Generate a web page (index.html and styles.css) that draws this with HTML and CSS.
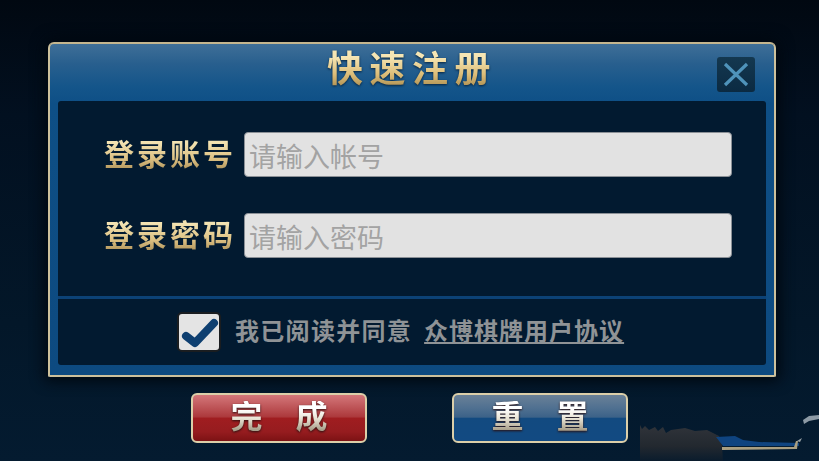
FILE: index.html
```html
<!DOCTYPE html>
<html lang="zh">
<head>
<meta charset="utf-8">
<title>快速注册</title>
<link rel="stylesheet" href="styles.css">
</head>
<body>
<main class="screen">
  <section class="dialog">
    <header class="dialog-head">
      <h1 class="title">快速注册</h1>
      <button class="close" type="button" aria-label="关闭">
        <svg viewBox="0 0 38 35" width="38" height="35"><path d="M8 7 L30 28 M30 7 L8 28" stroke="#4f93ba" stroke-width="3.2" fill="none"/></svg>
      </button>
    </header>
    <div class="dialog-body">
      <div class="fields">
        <div class="row">
          <label class="label" for="acc">登录账号</label>
          <input class="input" id="acc" placeholder="请输入帐号">
        </div>
        <div class="row">
          <label class="label" for="pwd">登录密码</label>
          <input class="input" id="pwd" placeholder="请输入密码">
        </div>
      </div>
      <div class="agree">
        <span class="check">
          <svg viewBox="0 0 40 36" width="40" height="36"><path d="M7 22 L16 29 L35 9" stroke="#0e3f70" stroke-width="8" stroke-linecap="round" stroke-linejoin="round" fill="none"/></svg>
        </span>
        <span class="agree-text">我已阅读并同意</span>
        <a class="agree-link" href="#">众博棋牌用户协议</a>
      </div>
    </div>
  </section>
  <div class="actions">
    <button class="btn btn-red" type="button"><span>完</span><span>成</span></button>
    <button class="btn btn-blue" type="button"><span>重</span><span>置</span></button>
  </div>
  <svg class="smudge" viewBox="0 0 180 40" width="180" height="40" aria-hidden="true">
    <defs>
      <linearGradient id="smudge-fade" x1="0" y1="0" x2="0" y2="1">
        <stop offset="0" stop-color="#30343a"/>
        <stop offset=".6" stop-color="#22282f"/>
        <stop offset="1" stop-color="#0a1c2d"/>
      </linearGradient>
    </defs>
    <path d="M1 4 L3 8 L6 5 L10 9 L16 6 L19 10 L24 6 L27 12 L32 9 L46 7 L56 10 L68 9 L80 15 L83 24 L84 40 L1 40 Z" fill="url(#smudge-fade)"/>
    <path d="M77 16 L96 15 L104 19 L120 21 L160 22 L160 25 L84 25 Z" fill="#0f4480"/>
    <path d="M83 26 L155 26 L157 20 L159 20 L158 28 L83 29 Z" fill="#a99f82"/>
    <path d="M158 20 L163 17 L161 21 Z" fill="#9aa4a8"/>
    <path d="M164 -1 L170 -5 L180 -6 L180 -2 L170 0 L165 3 Z" fill="#8d9aa5"/>
  </svg>
</main>
</body>
</html>
```
FILE: styles.css
```css
* { box-sizing: border-box; }
html, body { margin: 0; height: 100%; }
body {
  overflow: hidden;
  background: #02111f;
  font-family: "Liberation Sans", "Noto Sans CJK SC", sans-serif;
}
.screen {
  position: relative;
  width: 819px;
  height: 461px;
  padding: 42px 43px 0 48px;
  overflow: hidden;
  background:
    linear-gradient(180deg, #010811 0%, #021020 25%, #031729 70%, #041b30 100%);
}
.dialog {
  height: 335px;
  display: flex;
  flex-direction: column;
  padding: 0 8px 10px;
  border: 2px solid #cdc19c;
  border-top-color: #c4b68f;
  border-radius: 6px 6px 2px 2px;
  background: linear-gradient(180deg, #3f6f98 0%, #285f8e 6%, #14558a 13%, #0e4f86 18%, #0d4a80 100%);
  box-shadow: 0 0 14px 4px #010810;
}
.dialog-head {
  height: 57px;
  display: flex;
  align-items: center;
  justify-content: center;
  position: relative;
  flex: none;
}
.title {
  margin: -5px 0 0 0;
  font-size: 36px;
  font-weight: 700;
  letter-spacing: 6.5px;
  line-height: 44px;
  color: #e6cc8a;
  background: linear-gradient(180deg, #f6e6b4 20%, #dcbd78 60%, #b49658 85%);
  -webkit-background-clip: text;
  background-clip: text;
  -webkit-text-fill-color: transparent;
  filter: drop-shadow(0 1px 1px #06243f);
}
.close {
  position: absolute;
  right: 11px;
  top: 13px;
  width: 38px;
  height: 35px;
  padding: 0;
  border: 0;
  border-radius: 3px;
  background: linear-gradient(180deg, #143850, #0b2a42);
  display: block;
}
.close svg { display: block; }
.dialog-body {
  flex: 1;
  display: flex;
  flex-direction: column;
  border-radius: 3px;
  background: #021a30;
}
.fields {
  height: 195px;
  padding: 31px 34px 0 46px;
  display: flex;
  flex-direction: column;
  gap: 36px;
  flex: none;
}
.row {
  display: flex;
  align-items: center;
  height: 45px;
}
.label {
  width: 140px;
  flex: none;
  font-size: 30px;
  font-weight: 700;
  letter-spacing: 3px;
  line-height: 42px;
  white-space: nowrap;
  margin-top: 1px;
  background: linear-gradient(180deg, #f3e3b2 20%, #dcc082 60%, #a98d55 90%);
  -webkit-background-clip: text;
  background-clip: text;
  -webkit-text-fill-color: transparent;
}
.input {
  flex: 1;
  min-width: 0;
  height: 45px;
  padding: 8px 4px 0;
  border: 1px solid #8b9096;
  border-radius: 4px;
  background: #e2e2e2;
  font-family: inherit;
  font-size: 27px;
  color: #333;
  outline: 0;
}
.input::placeholder { color: #a3a3a3; opacity: 1; }
.agree {
  flex: 1;
  display: flex;
  align-items: center;
  padding-left: 119px;
  border-top: 3px solid #0c4276;
  color: #8f9396;
  font-size: 24px;
  font-weight: 700;
  letter-spacing: 1.3px;
}
.check {
  width: 44px;
  height: 40px;
  flex: none;
  margin-right: 14px;
  border: 2px solid #1a1d20;
  border-radius: 5px;
  background: #e4e4e4;
  display: flex;
}
.check svg { flex: none; display: block; }
.agree-text { margin-right: 12px; margin-top: -6px; }
.agree-link { color: #8f9396; text-decoration: underline; text-underline-offset: 2px; margin-top: -6px; letter-spacing: 1px; }
.actions {
  display: flex;
  gap: 85px;
  margin: 16px 0 0 143px;
}
.btn {
  width: 176px;
  height: 50px;
  padding: 0 0 2px;
  border: 2px solid #dccfa9;
  border-radius: 6px;
  display: flex;
  align-items: center;
  justify-content: center;
  gap: 33px;
  font-family: inherit;
  font-size: 32px;
  font-weight: 700;
  line-height: 1;
}
.btn span {
  background: linear-gradient(180deg, #ffffff 25%, #e8e3d4 55%, #a9a08c 90%);
  -webkit-background-clip: text;
  background-clip: text;
  -webkit-text-fill-color: transparent;
  filter: drop-shadow(0 1px 1px #2a1010);
}
.btn-red { background: linear-gradient(180deg, #d4777a 0%, #bb5053 30%, #ac383b 48%, #a01d20 50%, #961c1f 80%, #7c1214 100%); }
.btn-blue { background: linear-gradient(180deg, #6a8198 0%, #4e6f90 30%, #3c6288 48%, #124a80 51%, #124a82 100%); }
.smudge {
  position: absolute;
  left: 639px;
  top: 421px;
  overflow: visible;
}
```
